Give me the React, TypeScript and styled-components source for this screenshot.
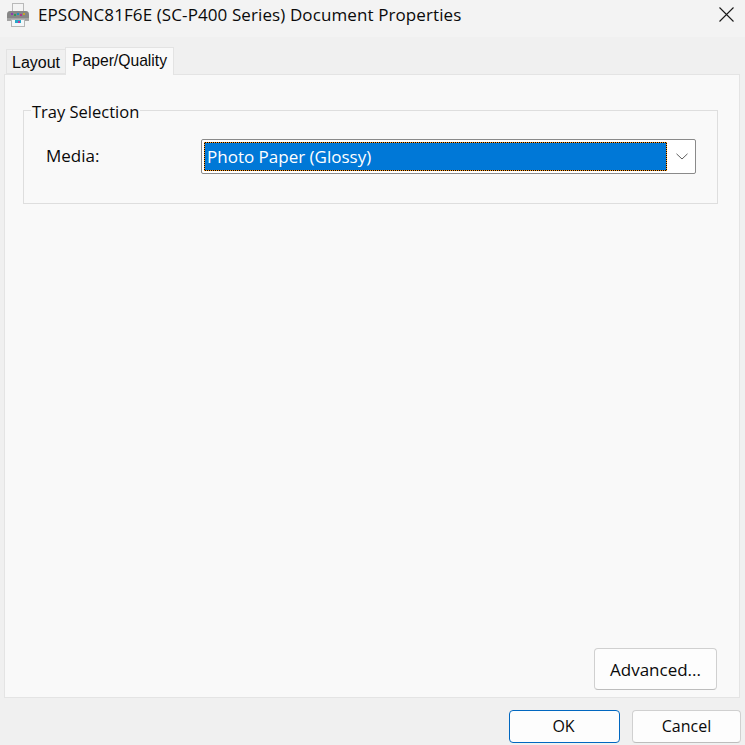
import React from "react";
import styled, { createGlobalStyle } from "styled-components";

const Global = createGlobalStyle`
  html, body { margin: 0; padding: 0; background: #f0f0f0; }
  * { box-sizing: border-box; }
`;

const Dialog = styled.div`
  width: 745px;
  height: 745px;
  display: flex;
  flex-direction: column;
  background: #f0f0f0;
  color: #0a0a0a;
  font-family: "Open Sans", "Noto Sans", sans-serif;
  overflow: hidden;
`;

const TitleBar = styled.div`
  height: 37px;
  flex: none;
  display: flex;
  align-items: center;
  background: #f3f3f3;
  padding: 0 11px 8px 6px;
`;

const TitleText = styled.div`
  flex: 1;
  margin-left: 8px;
  font-size: 17px;
  letter-spacing: 0.1px;
  white-space: nowrap;
`;

const TabRow = styled.div`
  height: 37px;
  flex: none;
  display: flex;
  align-items: flex-end;
  padding-left: 6px;
  position: relative;
  z-index: 1;
`;

const Tab = styled.div<{ $active?: boolean }>`
  height: ${(p) => (p.$active ? 28 : 25)}px;
  width: ${(p) => (p.$active ? 109 : 59)}px;
  margin-bottom: ${(p) => (p.$active ? -1 : 0)}px;
  background: ${(p) => (p.$active ? "#f9f9f9" : "#f0f0f0")};
  border: 1px solid #e3e3e3;
  border-bottom: ${(p) => (p.$active ? "none" : "1px solid #e3e3e3")};
  border-right: ${(p) => (p.$active ? "1px solid #e3e3e3" : "none")};
  font-family: "Liberation Sans", Arial, sans-serif;
  font-size: ${(p) => (p.$active ? 15.7 : 16)}px;
  line-height: ${(p) => (p.$active ? 25 : 26)}px;
  padding-left: ${(p) => (p.$active ? 6 : 5)}px;
  white-space: nowrap;
`;

const Panel = styled.div`
  flex: 1;
  margin: 0 5px 0 4px;
  display: flex;
  flex-direction: column;
  background: #f9f9f9;
  border: 1px solid #e4e4e4;
  padding: 22px 21px 7px 18px;
  min-height: 0;
`;

const Group = styled.fieldset`
  margin: 0;
  height: 107px;
  flex: none;
  border: 1px solid #dedede;
  padding: 0 21px 0 22px;
  min-width: 0;
`;

const GroupLegend = styled.legend`
  padding: 4px 1px 0;
  margin-left: -15px;
  font-size: 16.5px;
  line-height: 22px;
`;

const Row = styled.div`
  display: flex;
  align-items: center;
  margin-top: 16px;
`;

const FieldLabel = styled.div`
  width: 155px;
  padding-bottom: 2px;
  font-size: 17px;
`;

const Combo = styled.div`
  flex: 1;
  height: 35px;
  display: flex;
  align-items: center;
  background: #fff;
  border: 1px solid #8a8a8a;
  border-radius: 2px;
  padding: 2px 0 2px 2px;
`;

const ComboValue = styled.div`
  flex: 1;
  height: 29px;
  color: #fff;
  border: 1px solid transparent;
  background:
    linear-gradient(#0078d7, #0078d7) padding-box,
    repeating-conic-gradient(#000 0 25%, #ff9a1f 0 50%) 0 0 / 2px 2px border-box;
  font-size: 17px;
  line-height: 27px;
  padding-left: 2px;
  white-space: nowrap;
`;

const ComboArrow = styled.div`
  width: 28px;
  padding-left: 1px;
  display: flex;
  justify-content: center;
`;

const Spacer = styled.div`
  flex: 1;
`;

const ButtonRight = styled.div`
  display: flex;
  justify-content: flex-end;
  padding-right: 1px;
`;

const PushButton = styled.button<{ $w: number; $h: number; $primary?: boolean; $size?: number; $lift?: number }>`
  width: ${(p) => p.$w}px;
  height: ${(p) => p.$h}px;
  background: #fdfdfd;
  border: 1px solid ${(p) => (p.$primary ? "#0067c0" : "#d0d0d0")};
  border-bottom-color: ${(p) => (p.$primary ? "#0067c0" : "#bdbdbd")};
  border-radius: 4px;
  color: #0a0a0a;
  font-family: "Open Sans", "Noto Sans", sans-serif;
  font-size: ${(p) => p.$size ?? 16}px;
  padding: 0 ${(p) => (p.$primary ? 2 : 0)}px ${(p) => p.$lift ?? 0}px 0;
`;

const Footer = styled.div`
  height: 47px;
  flex: none;
  display: flex;
  justify-content: flex-end;
  align-items: flex-start;
  gap: 12px;
  padding: 12px 4px 0 0;
`;

const PrinterIcon = () => (
  <svg width="24" height="24" viewBox="0 0 24 24" style={{ flex: "none" }}>
    <rect x="6.5" y="0.5" width="11" height="9" fill="#f4f4f4" stroke="#b9b9b9" />
    <path d="M1 11.5 Q1 8 4 8 H20 Q23 8 23 11.5 V18 H1 Z" fill="#868686" />
    <rect x="1" y="15" width="22" height="3" fill="#a3a3a3" />
    <rect x="5" y="10" width="2" height="2" fill="#8c3bb0" />
    <rect x="8" y="11" width="2" height="2" fill="#2f9a58" />
    <rect x="11" y="10" width="2" height="2" fill="#1f8fc0" />
    <rect x="14" y="11" width="2" height="2" fill="#b0358a" />
    <rect x="17" y="10" width="2" height="2" fill="#c8a22c" />
    <rect x="5.5" y="16.5" width="13" height="7" fill="#f2f6f8" stroke="#b5b5b5" />
    <rect x="9" y="17" width="6" height="3" fill="#28a6c8" />
    <rect x="12" y="18" width="2" height="2" fill="#c23a96" />
  </svg>
);

const CloseIcon = () => (
  <svg width="15" height="15" viewBox="0 0 15 15">
    <path d="M0.5 0.5 L14.5 14.5 M14.5 0.5 L0.5 14.5" stroke="#1a1a1a" strokeWidth="1.1" fill="none" />
  </svg>
);

const ChevronIcon = () => (
  <svg width="12" height="7" viewBox="0 0 12 7">
    <path d="M0.5 0.8 L6 6 L11.5 0.8" stroke="#5f5f5f" strokeWidth="1" fill="none" />
  </svg>
);

export default function App() {
  return (
    <Dialog>
      <Global />
      <TitleBar>
        <PrinterIcon />
        <TitleText>EPSONC81F6E (SC-P400 Series) Document Properties</TitleText>
        <CloseIcon />
      </TitleBar>
      <TabRow>
        <Tab>Layout</Tab>
        <Tab $active>Paper/Quality</Tab>
      </TabRow>
      <Panel>
        <Group>
          <GroupLegend>Tray Selection</GroupLegend>
          <Row>
            <FieldLabel>Media:</FieldLabel>
            <Combo>
              <ComboValue>Photo Paper (Glossy)</ComboValue>
              <ComboArrow>
                <ChevronIcon />
              </ComboArrow>
            </Combo>
          </Row>
        </Group>
        <Spacer />
        <ButtonRight>
          <PushButton $w={123} $h={42} $size={17}>Advanced...</PushButton>
        </ButtonRight>
      </Panel>
      <Footer>
        <PushButton $w={111} $h={33} $primary $lift={2}>OK</PushButton>
        <PushButton $w={109} $h={33} $lift={2}>Cancel</PushButton>
      </Footer>
    </Dialog>
  );
}
